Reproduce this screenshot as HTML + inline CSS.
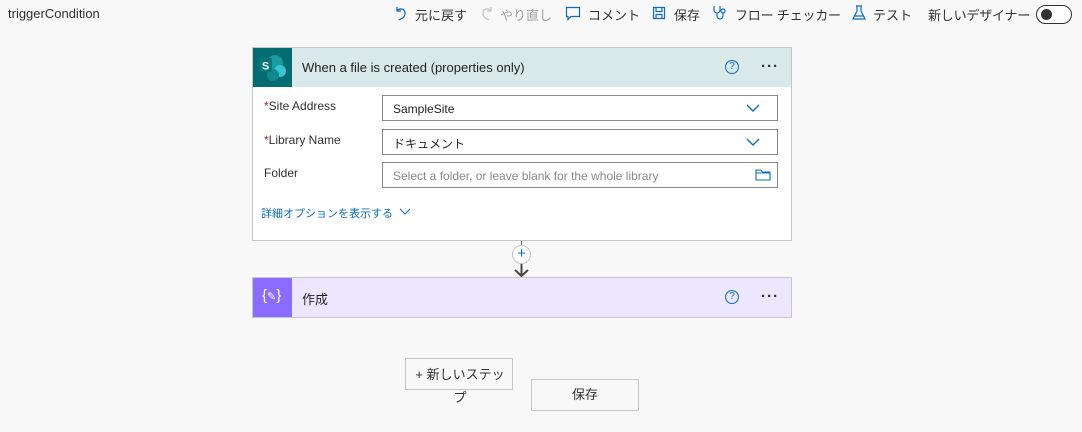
<!DOCTYPE html>
<html><head><meta charset="utf-8"><style>
*{box-sizing:border-box;margin:0;padding:0}
body{width:1082px;height:432px;background:#f8f8f8;font-family:"Liberation Sans","Noto Sans CJK JP",sans-serif;position:relative;overflow:hidden;color:#323130}
.a{position:absolute}
.tb{font-size:13px;color:#323130;top:5px;white-space:nowrap}
.lbl{font-size:12px;color:#323130;left:264px}
.inp{left:382px;width:396px;height:26px;border:1px solid #8a8886;background:#fff;font-size:12px;padding:6px 10px;color:#201f1e}
</style></head><body>
<div class="a tb" style="left:8px;top:6px;font-size:13px">triggerCondition</div>
<svg class="a" style="left:394px;top:5px" width="14" height="16" viewBox="0 0 14 16"><path d="M3 2v4h4M3 6c2-3 8-3 8 2s-4 6-6 7" fill="none" stroke="#0f6cbd" stroke-width="1.3"/></svg>
<div class="a tb" style="left:415px">元に戻す</div>
<svg class="a" style="left:480px;top:5px" width="14" height="16" viewBox="0 0 14 16"><path d="M11 2v4H7M11 6C9 3 3 3 3 8s4 6 6 7" fill="none" stroke="#c8c6c4" stroke-width="1.3"/></svg>
<div class="a tb" style="left:500px;color:#a19f9d">やり直し</div>
<svg class="a" style="left:565px;top:6px" width="16" height="15" viewBox="0 0 16 15"><path d="M1.5 1.5h13v9H6l-3 3v-3H1.5z" fill="none" stroke="#0f6cbd" stroke-width="1.2"/></svg>
<div class="a tb" style="left:588px">コメント</div>
<svg class="a" style="left:652px;top:6px" width="14" height="14" viewBox="0 0 14 14"><path d="M1.5 1.5h11v11h-11z M4 1.5v4h6v-4 M4 12.5v-4h6v4" fill="none" stroke="#0f6cbd" stroke-width="1.2"/></svg>
<div class="a tb" style="left:674px">保存</div>
<svg class="a" style="left:712px;top:5px" width="16" height="16" viewBox="0 0 16 16"><path d="M2 1v4a3 3 0 0 0 6 0V1M5 8v3a3 3 0 0 0 6 0V8" fill="none" stroke="#0f6cbd" stroke-width="1.2"/><circle cx="11" cy="6" r="2" fill="none" stroke="#0f6cbd" stroke-width="1.2"/></svg>
<div class="a tb" style="left:735px;letter-spacing:-0.2px">フロー チェッカー</div>
<svg class="a" style="left:852px;top:5px" width="14" height="16" viewBox="0 0 14 16"><path d="M4 1h6M5 1v5l-4 8h12l-4-8V1M2.5 11h9" fill="none" stroke="#0f6cbd" stroke-width="1.2"/></svg>
<div class="a tb" style="left:873px">テスト</div>
<div class="a tb" style="left:928px;letter-spacing:-0.2px">新しいデザイナー</div>
<div class="a" style="left:1036px;top:5px;width:36px;height:19px;border:1px solid #323130;border-radius:10px;background:#fff"><div class="a" style="left:4px;top:3px;width:11px;height:11px;border-radius:50%;background:#323130"></div></div>

<div class="a" style="left:252px;top:47px;width:540px;height:194px;background:#fff;border:1px solid #c8c6c4"></div>
<div class="a" style="left:253px;top:48px;width:538px;height:39px;background:#d9e8e8"></div>
<div class="a" style="left:253px;top:48px;width:39px;height:39px;background:#036c70"></div>
<svg class="a" style="left:257px;top:53px" width="32" height="30" viewBox="0 0 32 30"><circle cx="18" cy="10" r="8" fill="#1a9ba1"/><circle cx="23" cy="18" r="6" fill="#37c6d0"/><circle cx="16" cy="22" r="6" fill="#0b8a8f"/><rect x="2" y="5" width="13" height="14" rx="1.5" fill="#03787c"/><text x="8.5" y="16.5" font-size="11" font-weight="bold" fill="#fff" text-anchor="middle" font-family="Liberation Sans">S</text></svg>
<div class="a" style="left:302px;top:60px;font-size:13px;color:#201f1e">When a file is created (properties only)</div>
<div class="a" style="left:725px;top:60px;width:14px;height:14px;border:1.3px solid #0f6cbd;border-radius:50%;font-size:10px;color:#0f6cbd;text-align:center;line-height:12px">?</div>
<div class="a" style="left:761px;top:58px;font-size:15px;font-weight:bold;letter-spacing:1px;color:#323130">···</div>

<div class="a lbl" style="top:99px"><span style="color:#a4262c">*</span>Site Address</div>
<div class="a inp" style="top:95px">SampleSite</div>
<svg class="a" style="left:746px;top:103px" width="14" height="10"><path d="M1 2l6 6 6-6" fill="none" stroke="#0f6cbd" stroke-width="1.4"/></svg>
<div class="a lbl" style="top:133px"><span style="color:#a4262c">*</span>Library Name</div>
<div class="a inp" style="top:129px;padding-top:5px">ドキュメント</div>
<svg class="a" style="left:746px;top:137px" width="14" height="10"><path d="M1 2l6 6 6-6" fill="none" stroke="#0f6cbd" stroke-width="1.4"/></svg>
<div class="a lbl" style="top:166px">Folder</div>
<div class="a inp" style="top:162px;color:#8a8886">Select a folder, or leave blank for the whole library</div>
<svg class="a" style="left:755px;top:168px" width="16" height="13"><path d="M1 2h5l1.5 2H15v8H1z M1 5h14" fill="none" stroke="#0f6cbd" stroke-width="1.1"/></svg>
<div class="a" style="left:261px;top:205px;font-size:11px;color:#0f6cbd">詳細オプションを表示する</div>
<svg class="a" style="left:399px;top:208px" width="12" height="8"><path d="M1 1l5 5 5-5" fill="none" stroke="#0f6cbd" stroke-width="1.1"/></svg>

<div class="a" style="left:521px;top:241px;width:1px;height:5px;background:#605e5c"></div>
<div class="a" style="left:512px;top:245px;width:19px;height:19px;border:1px solid #c8c6c4;border-radius:50%;background:#fff;color:#0f6cbd;font-size:15px;text-align:center;line-height:16px">+</div>
<svg class="a" style="left:513px;top:264px" width="17" height="13"><path d="M8.5 0v12M2 6l6.5 6L15 6" fill="none" stroke="#484644" stroke-width="2"/></svg>

<div class="a" style="left:252px;top:277px;width:540px;height:41px;background:#ece7fe;border:1px solid #c8c6c4"></div>
<div class="a" style="left:253px;top:278px;width:39px;height:39px;background:#8c6cff"></div>
<div class="a" style="left:262px;top:287px;font-size:15px;color:#fff">{<span style="font-size:11px">✎</span>}</div>
<div class="a" style="left:302px;top:289px;font-size:13px;color:#201f1e">作成</div>
<div class="a" style="left:725px;top:290px;width:14px;height:14px;border:1.3px solid #0f6cbd;border-radius:50%;font-size:10px;color:#0f6cbd;text-align:center;line-height:12px">?</div>
<div class="a" style="left:761px;top:288px;font-size:15px;font-weight:bold;letter-spacing:1px;color:#323130">···</div>

<div class="a" style="left:405px;top:358px;width:108px;height:32px;border:1px solid #c8c6c4;background:#f8f8f8"></div>
<div class="a" style="left:412px;top:363px;width:96px;font-size:13px;line-height:23px;text-align:center;color:#323130">+ 新しいステップ</div>
<div class="a" style="left:531px;top:379px;width:108px;height:32px;border:1px solid #c8c6c4;background:#f8f8f8;font-size:13px;text-align:center;line-height:30px">保存</div>
</body></html>
